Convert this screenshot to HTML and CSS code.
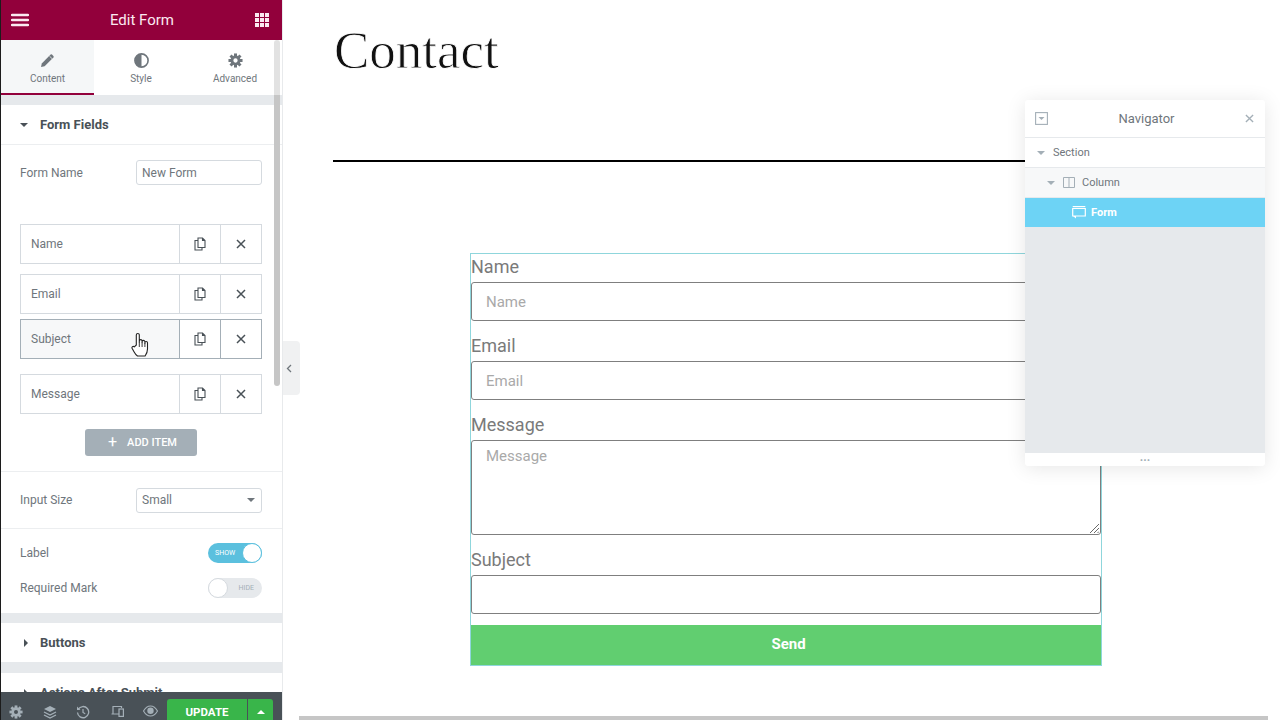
FILE: index.html
```html
<!DOCTYPE html>
<html lang="en">
<head>
  <meta charset="UTF-8" />
  <meta name="viewport" content="width=device-width, initial-scale=1.0" />
  <title>Edit Form</title>
  <link rel="stylesheet" href="styles.css">
</head>
<body>
  <svg class="defs" width="0" height="0">
    <symbol id="i-gear" viewBox="0 0 16 16">
      <g fill="currentColor">
        <rect x="6.4" y="0.5" width="3.2" height="3.4" />
        <rect x="6.4" y="0.5" width="3.2" height="3.4" transform="rotate(45 8 8)" />
        <rect x="6.4" y="0.5" width="3.2" height="3.4" transform="rotate(90 8 8)" />
        <rect x="6.4" y="0.5" width="3.2" height="3.4" transform="rotate(135 8 8)" />
        <rect x="6.4" y="0.5" width="3.2" height="3.4" transform="rotate(180 8 8)" />
        <rect x="6.4" y="0.5" width="3.2" height="3.4" transform="rotate(225 8 8)" />
        <rect x="6.4" y="0.5" width="3.2" height="3.4" transform="rotate(270 8 8)" />
        <rect x="6.4" y="0.5" width="3.2" height="3.4" transform="rotate(315 8 8)" />
      </g>
      <circle cx="8" cy="8" r="3.8" fill="none" stroke="currentColor" stroke-width="3" />
    </symbol>
    <symbol id="i-copy" viewBox="0 0 12 14">
      <path d="M4 1h4.5L11 3.5V10.5H4zM8.5 1v2.5H11M4 3.5H1V13H8V10.5" fill="none" stroke="currentColor" stroke-width="1.1" />
    </symbol>
    <symbol id="i-x" viewBox="0 0 10 10">
      <path d="M1 1l8 8M9 1l-8 8" fill="none" stroke="currentColor" stroke-width="1.5" />
    </symbol>
  </svg>

  <!-- Editor panel -->
  <aside class="panel">
    <header class="panel-head">
      <svg class="head-icon" width="18" height="14" viewBox="0 0 18 14"><path d="M1 2h16M1 7h16M1 12h16" stroke="currentColor" stroke-width="2.4" stroke-linecap="round" /></svg>
      <span class="panel-title">Edit Form</span>
      <svg class="head-icon" width="14" height="14" viewBox="0 0 14 14" fill="currentColor">
        <rect x="0" y="0" width="4" height="4" /><rect x="5" y="0" width="4" height="4" /><rect x="10" y="0" width="4" height="4" />
        <rect x="0" y="5" width="4" height="4" /><rect x="5" y="5" width="4" height="4" /><rect x="10" y="5" width="4" height="4" />
        <rect x="0" y="10" width="4" height="4" /><rect x="5" y="10" width="4" height="4" /><rect x="10" y="10" width="4" height="4" />
      </svg>
    </header>

    <nav class="tabs">
      <div class="tab active">
        <svg width="15" height="15" viewBox="0 0 15 15"><path d="M1 14l.8-3.6L10.6 1.6a1 1 0 0 1 1.4 0l1.4 1.4a1 1 0 0 1 0 1.4L4.6 13.2z" fill="currentColor" /><path d="M9.4 3l2.6 2.6" stroke="#f3f5f6" stroke-width="0.8" /></svg>
        <span>Content</span>
      </div>
      <div class="tab">
        <svg width="15" height="15" viewBox="0 0 15 15"><circle cx="7.5" cy="7.5" r="6.6" fill="none" stroke="currentColor" stroke-width="1.6" /><path d="M7.5 1a6.5 6.5 0 0 0 0 13z" fill="currentColor" /></svg>
        <span>Style</span>
      </div>
      <div class="tab">
        <svg width="15" height="15"><use href="#i-gear" /></svg>
        <span>Advanced</span>
      </div>
    </nav>

    <div class="panel-body">
      <section class="group">
        <h3 class="group-title"><i class="caret-down"></i>Form Fields</h3>
        <div class="control form-name">
          <label>Form Name</label>
          <div class="text-box">New Form</div>
        </div>

        <div class="repeater">
          <div class="rep-row">
            <span class="rep-name">Name</span>
            <span class="rep-btn"><svg width="12" height="14"><use href="#i-copy" /></svg></span>
            <span class="rep-btn"><svg width="10" height="10"><use href="#i-x" /></svg></span>
          </div>
          <div class="rep-row">
            <span class="rep-name">Email</span>
            <span class="rep-btn"><svg width="12" height="14"><use href="#i-copy" /></svg></span>
            <span class="rep-btn"><svg width="10" height="10"><use href="#i-x" /></svg></span>
          </div>
          <div class="rep-row dragging">
            <span class="rep-name">Subject</span>
            <span class="rep-btn"><svg width="12" height="14"><use href="#i-copy" /></svg></span>
            <span class="rep-btn"><svg width="10" height="10"><use href="#i-x" /></svg></span>
            <svg class="hand" width="18" height="25" viewBox="0 0 18 25">
              <path d="M5.3 13V3a1.5 1.5 0 0 1 3 0v7-1a1.4 1.4 0 0 1 2.8 0v1.6-.8a1.4 1.4 0 0 1 2.8 0v1.4-.4a1.3 1.3 0 0 1 2.6 0V17c0 3-1 5-2.4 7H6.500c-1.500-1-2.500-2.500-3.500-4.300L1.200 16.500c-.8-1.500.9-2.800 2.100-1.700z" fill="#fff" stroke="#222" stroke-width="1.100" stroke-linejoin="round" />
              <path d="M8.300 10v5M11.100 10.500v4.500M13.900 11v4" stroke="#222" stroke-width="0.900" />
            </svg>
          </div>
          <div class="rep-row">
            <span class="rep-name">Message</span>
            <span class="rep-btn"><svg width="12" height="14"><use href="#i-copy" /></svg></span>
            <span class="rep-btn"><svg width="10" height="10"><use href="#i-x" /></svg></span>
          </div>
          <button class="add-item"><span class="plus">+</span>ADD ITEM</button>
        </div>

        <div class="control input-size">
          <label>Input Size</label>
          <div class="text-box select-box">Small<i class="caret-down small"></i></div>
        </div>

        <div class="toggles">
          <div class="toggle-row">
            <label>Label</label>
            <div class="switch on"><span>SHOW</span><b></b></div>
          </div>
          <div class="toggle-row">
            <label>Required Mark</label>
            <div class="switch"><b></b><span>HIDE</span></div>
          </div>
        </div>
      </section>

      <section class="group">
        <h3 class="group-title closed"><i class="caret-right"></i>Buttons</h3>
      </section>
      <section class="group">
        <h3 class="group-title closed"><i class="caret-right"></i>Actions After Submit</h3>
      </section>
    </div>

    <div class="scroll-thumb"></div>

    <footer class="panel-foot">
      <div class="foot-icons">
        <svg width="14" height="14"><use href="#i-gear" /></svg>
        <svg width="14" height="14" viewBox="0 0 14 14"><path d="M7 1l6 3-6 3-6-3z" fill="currentColor" /><path d="M1 7l6 3 6-3M1 10l6 3 6-3" fill="none" stroke="currentColor" stroke-width="1.300" /></svg>
        <svg width="14" height="14" viewBox="0 0 14 14"><path d="M2.300 4.200A5.600 5.600 0 1 1 1.500 7.500" fill="none" stroke="currentColor" stroke-width="1.300" /><path d="M1 1.500v3.500h3.500z" fill="currentColor" /><path d="M7 4v3.500l2.200 1.300" fill="none" stroke="currentColor" stroke-width="1.200" /></svg>
        <svg width="14" height="12" viewBox="0 0 14 12"><path d="M9 9H1.500M3 9V1.500h8.500V3" fill="none" stroke="currentColor" stroke-width="1.200" /><rect x="9" y="4" width="4.400" height="7.400" fill="none" stroke="currentColor" stroke-width="1.200" /></svg>
        <svg width="15" height="12" viewBox="0 0 15 12"><path d="M.5 6C2.500 2.500 5 1 7.500 1s5 1.500 7 5c-2 3.500-4.500 5-7 5s-5-1.500-7-5z" fill="none" stroke="currentColor" stroke-width="1.100" /><circle cx="7.500" cy="5.800" r="3.200" fill="currentColor" /></svg>
      </div>
      <div class="update">
        <span class="update-btn">UPDATE</span>
        <span class="update-arrow"><i class="caret-up"></i></span>
      </div>
    </footer>
  </aside>

  <!-- Page preview -->
  <main class="preview">
    <div class="collapse-tab"><svg width="6" height="9" viewBox="0 0 6 9"><path d="M5 1L1.500 4.500 5 8" fill="none" stroke="currentColor" stroke-width="1.300" /></svg></div>

    <h1 class="page-title">Contact</h1>
    <hr class="page-rule" />

    <form class="contact-form">
      <label>Name</label>
      <div class="field">Name</div>
      <label>Email</label>
      <div class="field">Email</div>
      <label>Message</label>
      <div class="field area">Message
        <svg class="grip" width="9" height="9" viewBox="0 0 9 9"><path d="M0 9L9 0M4 9l5-5M7.500 9L9 7.500" stroke="#444" stroke-width="0.800" /></svg>
      </div>
      <label>Subject</label>
      <div class="field"></div>
      <div class="send">Send</div>
    </form>

    <div class="navigator">
      <div class="nav-head">
        <svg width="13" height="13" viewBox="0 0 13 13"><rect x="0.600" y="0.600" width="11.800" height="11.800" fill="none" stroke="currentColor" stroke-width="1.100" /><path d="M3.500 5h6l-3 3z" fill="currentColor" /></svg>
        <span class="nav-title">Navigator</span>
        <svg width="9" height="9"><use href="#i-x" /></svg>
      </div>
      <div class="nav-row section-row"><i class="caret-down tiny"></i>Section</div>
      <div class="nav-row column-row"><i class="caret-down tiny"></i>
        <svg width="12" height="11" viewBox="0 0 12 11"><path d="M.5.500h11v10H.5zM6 .5v10" fill="none" stroke="currentColor" /></svg>
        Column</div>
      <div class="nav-row form-row">
        <svg width="14" height="13" viewBox="0 0 14 13"><path d="M.7 2.500h12.600v7.500H.7z" fill="none" stroke="currentColor" stroke-width="1.200" /><path d="M.7.600h12.600" stroke="currentColor" stroke-width="1.200" /><path d="M1 10h3v2.500z" fill="currentColor" /></svg>
        Form</div>
      <div class="nav-empty"></div>
      <div class="nav-foot">...</div>
    </div>

    <div class="h-scroll"></div>
  </main>
</body>
</html>
```

FILE: styles.css
```css
* {
  box-sizing: border-box;
}
html, body {
  width: 100%;
  height: 100%;
  margin: 0;
  padding: 0;
  overflow: hidden;
  background: #FFFFFF;
  font-family: Roboto, "Liberation Sans", sans-serif;
}
body {
  display: flex;
}
.defs {
  position: absolute;
}
i {
  display: inline-block;
}

/* Carets */
.caret-down {
  width: 0;
  height: 0;
  border-left: 4px solid transparent;
  border-right: 4px solid transparent;
  border-top: 4px solid #495157;
}
.caret-down.small {
  border-top-color: #6f767c;
}
.caret-down.tiny {
  border-top-color: #a4afb7;
}
.caret-right {
  width: 0;
  height: 0;
  border-top: 4px solid transparent;
  border-bottom: 4px solid transparent;
  border-left: 4px solid #495157;
}
.caret-up {
  width: 0;
  height: 0;
  border-left: 4px solid transparent;
  border-right: 4px solid transparent;
  border-bottom: 4px solid #FFFFFF;
}

/* Editor panel */
.panel {
  position: relative;
  width: 283px;
  height: 720px;
  flex-shrink: 0;
  display: flex;
  flex-direction: column;
  border-left: 1px solid #1c1c1c;
  border-right: 1px solid #e8eaec;
  background: #FFFFFF;
  color: #6f767c;
}
.panel-head {
  height: 40px;
  flex-shrink: 0;
  display: flex;
  align-items: center;
  justify-content: space-between;
  padding: 0 13px 0 10px;
  background: #92003b;
  color: #fbe9f1;
}
.head-icon {
  display: block;
}
.panel-title {
  font-size: 15px;
  font-weight: 400;
}
.tabs {
  height: 55px;
  flex-shrink: 0;
  display: flex;
}
.tab {
  width: 93px;
  display: flex;
  flex-direction: column;
  align-items: center;
  gap: 5px;
  padding-top: 13px;
  font-size: 10px;
  color: #6f767c;
}
.tab:nth-child(2), .tab:nth-child(3) {
  width: 94px;
}
.tab.active {
  background: #f5f7f8;
  border-bottom: 2px solid #92003b;
}
.panel-body {
  flex: 1;
  overflow: hidden;
  background: #e6e9ec;
  padding-top: 10px;
}
.group {
  background: #FFFFFF;
  margin-bottom: 10px;
}
.group + .group {
  margin-bottom: 11px;
}
.group-title {
  height: 40px;
  margin: 0;
  display: flex;
  align-items: center;
  gap: 12px;
  padding-left: 19px;
  font-size: 13px;
  font-weight: 700;
  color: #495157;
  border-bottom: 1px solid #eceef0;
}
.group-title.closed {
  height: 39px;
  border-bottom: none;
}
.group-title .caret-right {
  margin-left: 4px;
}
.control {
  display: flex;
  align-items: center;
  justify-content: space-between;
  padding: 0 20px 0 19px;
  font-size: 12px;
}
.form-name {
  padding-top: 15px;
}
.text-box {
  width: 126px;
  height: 25px;
  line-height: 25px;
  padding-left: 5px;
  border: 1px solid #d5dadf;
  border-radius: 3px;
  font-size: 12px;
  color: #6f767c;
}
.select-box {
  display: flex;
  align-items: center;
  justify-content: space-between;
  padding-right: 6px;
}

/* Repeater */
.repeater {
  display: flex;
  flex-direction: column;
  padding: 39px 20px 15px 19px;
  border-bottom: 1px solid #eceef0;
}
.rep-row {
  position: relative;
  height: 40px;
  display: flex;
  align-items: center;
  margin-bottom: 10px;
  border: 1px solid #d5dadf;
  font-size: 12px;
  color: #6f767c;
}
.rep-row:nth-child(2) {
  margin-bottom: 5px;
}
.rep-row.dragging {
  margin-bottom: 15px;
  border-color: #a4afb7;
}
.rep-row.dragging .rep-name {
  background: #f7f8f9;
}
.rep-name {
  flex: 1;
  height: 100%;
  line-height: 38px;
  padding-left: 10px;
}
.rep-btn {
  width: 41px;
  height: 100%;
  display: flex;
  align-items: center;
  justify-content: center;
  border-left: 1px solid #d5dadf;
  color: #495157;
}
.rep-row.dragging .rep-btn {
  border-left-color: #a4afb7;
}
.hand {
  position: absolute;
  left: 110px;
  top: 12px;
}
.add-item {
  align-self: center;
  width: 112px;
  height: 27px;
  margin-top: 5px;
  padding: 0 0 3px 3px;
  border: none;
  border-radius: 3px;
  background: #a4afb7;
  color: #FFFFFF;
  font-family: inherit;
  font-size: 11px;
  font-weight: 500;
}
.plus {
  font-size: 16px;
  font-weight: 400;
  margin-right: 10px;
  vertical-align: -1px;
}
.input-size {
  height: 57px;
  border-bottom: 1px solid #eceef0;
}
.toggles {
  display: flex;
  flex-direction: column;
  gap: 15px;
  padding: 14px 20px 15px 19px;
}
.toggle-row {
  display: flex;
  align-items: center;
  justify-content: space-between;
  font-size: 12px;
}
.switch {
  width: 54px;
  height: 20px;
  display: flex;
  align-items: center;
  justify-content: space-between;
  border-radius: 10px;
  background: #e6e9ec;
  font-size: 7px;
  color: #a4afb7;
}
.switch b {
  width: 20px;
  height: 20px;
  border-radius: 50%;
  background: #FFFFFF;
  border: 1px solid #d5dadf;
}
.switch span {
  padding-right: 8px;
}
.switch.on {
  background: #5bc0de;
  color: #FFFFFF;
}
.switch.on span {
  padding: 0 0 0 7px;
}
.switch.on b {
  border-color: #5bc0de;
}
.scroll-thumb {
  position: absolute;
  top: 40px;
  left: 273px;
  width: 6px;
  height: 346px;
  border-radius: 3px;
  background: linear-gradient(#e2e2e2 55px, #c6c6c6 55px);
}

/* Bottom bar */
.panel-foot {
  height: 28px;
  flex-shrink: 0;
  display: flex;
  justify-content: space-between;
  padding: 7px 9px 0 8px;
  background: #495157;
}
.foot-icons {
  display: flex;
  gap: 19.5px;
  padding-top: 6px;
  color: #a4afb7;
}
.update {
  display: flex;
  gap: 1px;
  height: 28px;
}
.update-btn {
  width: 80px;
  text-align: center;
  line-height: 27px;
  background: #39b54a;
  border-radius: 3px 0 0 0;
  color: #FFFFFF;
  font-size: 11.5px;
  font-weight: 700;
}
.update-arrow {
  width: 25px;
  display: flex;
  justify-content: center;
  padding-top: 11px;
  background: #39b54a;
  border-radius: 0 3px 0 0;
}

/* Preview */
.preview {
  position: relative;
  flex: 1;
  height: 720px;
  padding: 0 0 0 50px;
  overflow: hidden;
}
.page-title {
  margin: 0;
  padding: 17px 0 0 1px;
  height: 160px;
  font-family: "Liberation Serif", serif;
  font-size: 53px;
  font-weight: 400;
  line-height: 66px;
  color: #111111;
  -webkit-text-stroke: 0.8px #FFFFFF;
}
.page-rule {
  width: 780px;
  height: 2px;
  margin: 0;
  border: none;
  background: #000000;
}
.contact-form {
  width: 632px;
  height: 413px;
  margin: 91px 0 0 137px;
  display: flex;
  flex-direction: column;
  border: 1px solid #8fd6dc;
}
.contact-form label {
  height: 28px;
  line-height: 25px;
  font-size: 18px;
  color: #7a7a7a;
}
.contact-form label:nth-of-type(n+2) {
  height: 40px;
  padding-top: 11px;
  line-height: 28px;
}
.field {
  position: relative;
  height: 39px;
  padding-left: 14px;
  line-height: 38px;
  border: 1px solid #7f7f7f;
  border-radius: 3px;
  font-size: 15px;
  color: #a9a9a9;
}
.field.area {
  height: 95px;
  line-height: 30px;
}
.grip {
  position: absolute;
  right: 1px;
  bottom: 1px;
}
.send {
  height: 40px;
  margin-top: 11px;
  padding-left: 5px;
  text-align: center;
  line-height: 38px;
  background: #61ce70;
  color: #FFFFFF;
  font-size: 15px;
  font-weight: 700;
}
.collapse-tab {
  position: absolute;
  left: 0;
  top: 341px;
  width: 17px;
  height: 54px;
  display: flex;
  align-items: center;
  padding-left: 3px;
  border-radius: 0 4px 4px 0;
  background: #f0f1f2;
  color: #6f767c;
}

/* Navigator */
.navigator {
  position: absolute;
  left: 742px;
  top: 100px;
  width: 240px;
  height: 366px;
  display: flex;
  flex-direction: column;
  background: #FFFFFF;
  border-radius: 3px;
  box-shadow: 0 2px 20px rgba(0,0,0,0.1);
  font-size: 11px;
  color: #6f767c;
}
.nav-head {
  height: 38px;
  flex-shrink: 0;
  display: flex;
  align-items: center;
  justify-content: space-between;
  padding: 0 11px 0 10px;
  border-bottom: 1px solid #e6e9ec;
  color: #a4afb7;
}
.nav-title {
  font-size: 13px;
  color: #6f767c;
}
.nav-row {
  height: 30px;
  flex-shrink: 0;
  display: flex;
  align-items: center;
  gap: 8px;
  border-bottom: 1px solid #e6e9ec;
}
.section-row {
  padding-left: 12px;
}
.column-row {
  padding-left: 22px;
  background: #f7f8f9;
}
.column-row svg {
  margin-right: -1px;
  color: #a4afb7;
}
.form-row {
  height: 29px;
  gap: 5px;
  padding-left: 47px;
  background: #6dd3f5;
  border-bottom: none;
  color: #FFFFFF;
  font-weight: 700;
}
.nav-empty {
  flex: 1;
  background: #e6e9ec;
}
.nav-foot {
  height: 13px;
  flex-shrink: 0;
  text-align: center;
  line-height: 8px;
  font-size: 12px;
  font-weight: 700;
  color: #a4afb7;
}
.h-scroll {
  position: absolute;
  left: 16px;
  bottom: 0;
  width: 969px;
  height: 4px;
  background: #c6c6c6;
}
```
